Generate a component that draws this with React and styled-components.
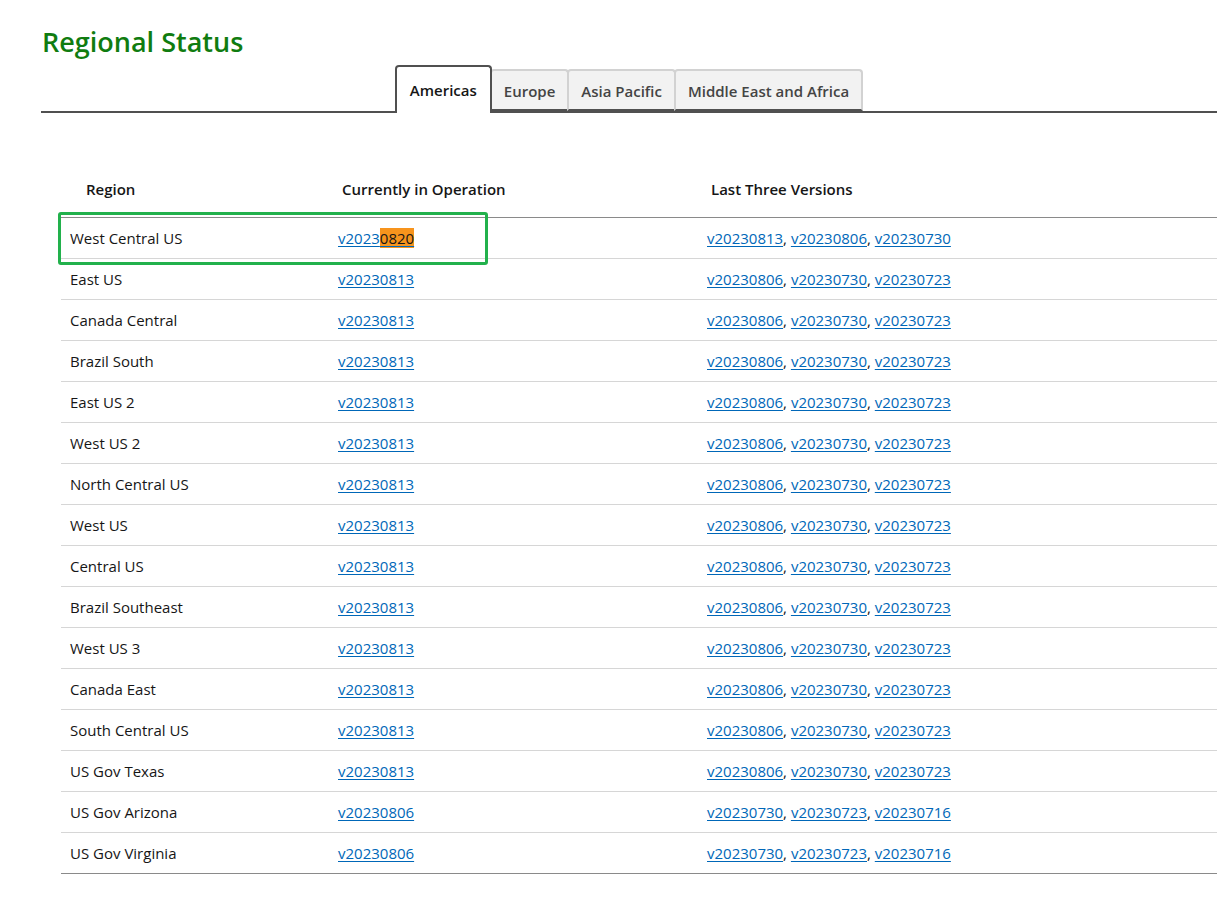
import React from "react";
import styled, { createGlobalStyle } from "styled-components";

const Global = createGlobalStyle`
  body { margin: 0; background: #fff; font-family: "Segoe UI", "Open Sans", "Noto Sans", sans-serif; color: #161616; }
`;

const Page = styled.div`
  padding: 21px 0 40px 41px;
  width: 1176px;
  overflow: hidden;
`;

const Title = styled.h1`
  margin: 3px 0 5px 1px;
  font-size: 27px;
  font-weight: 600;
  color: #107c10;
  line-height: 36px;
`;

const TabBar = styled.div`
  display: flex;
  justify-content: center;
  align-items: flex-end;
  border-bottom: 2px solid #505050;
  height: 46px;
`;

const Tab = styled.div`
  box-sizing: border-box;
  height: ${(p) => (p.$active ? "48px" : "42px")};
  margin-bottom: ${(p) => (p.$active ? "-2px" : "0")};
  padding: 0 ${(p) => (p.$active ? "13px" : "12px")};
  display: flex;
  align-items: center;
  padding-top: ${(p) => (p.$active ? "0" : "2px")};
  font-size: 15px;
  font-weight: 600;
  color: ${(p) => (p.$active ? "#161616" : "#444")};
  background: ${(p) => (p.$active ? "#fff" : "#f2f2f2")};
  border: 2px solid ${(p) => (p.$active ? "#505050" : "#d2d2d2")};
  border-bottom: ${(p) => (p.$active ? "none" : "2px solid #505050")};
  border-radius: 4px 4px 0 0;
  margin-left: ${(p) => (p.$first ? "0" : "-2px")};
  position: relative;
  z-index: ${(p) => (p.$active ? 1 : 0)};
`;

const TableWrap = styled.div`
  position: relative;
  margin: 48px 0 0 20px;
`;

const Table = styled.table`
  border-collapse: collapse;
  width: 1160px;
  font-size: 15px;
`;

const Th = styled.th`
  text-align: left;
  font-weight: 600;
  height: 56px;
  padding: 0 0 0 ${(p) => p.$pl}px;
  border-bottom: 1px solid #8a8a8a;
  width: ${(p) => p.$w}px;
  vertical-align: middle;
  box-sizing: border-box;
`;

const Tr = styled.tr`
  border-bottom: 1px solid ${(p) => (p.$last ? "#8a8a8a" : "#d6d6d6")};
`;

const Td = styled.td`
  height: 40px;
  padding: 0 0 0 9px;
  vertical-align: middle;
  white-space: nowrap;
`;

const Link = styled.a`
  color: #0067b8;
  text-decoration: underline;
  text-underline-offset: 2px;
`;

const Mark = styled.span`
  background: #f7941d;
  color: #161616;
`;

const Highlight = styled.div`
  position: absolute;
  left: -3px;
  top: 51px;
  width: 424px;
  height: 47px;
  border: 3px solid #22b14c;
  border-radius: 3px;
  pointer-events: none;
`;

const rows = [
  ["West Central US", "v20230820", ["v20230813", "v20230806", "v20230730"]],
  ["East US", "v20230813", ["v20230806", "v20230730", "v20230723"]],
  ["Canada Central", "v20230813", ["v20230806", "v20230730", "v20230723"]],
  ["Brazil South", "v20230813", ["v20230806", "v20230730", "v20230723"]],
  ["East US 2", "v20230813", ["v20230806", "v20230730", "v20230723"]],
  ["West US 2", "v20230813", ["v20230806", "v20230730", "v20230723"]],
  ["North Central US", "v20230813", ["v20230806", "v20230730", "v20230723"]],
  ["West US", "v20230813", ["v20230806", "v20230730", "v20230723"]],
  ["Central US", "v20230813", ["v20230806", "v20230730", "v20230723"]],
  ["Brazil Southeast", "v20230813", ["v20230806", "v20230730", "v20230723"]],
  ["West US 3", "v20230813", ["v20230806", "v20230730", "v20230723"]],
  ["Canada East", "v20230813", ["v20230806", "v20230730", "v20230723"]],
  ["South Central US", "v20230813", ["v20230806", "v20230730", "v20230723"]],
  ["US Gov Texas", "v20230813", ["v20230806", "v20230730", "v20230723"]],
  ["US Gov Arizona", "v20230806", ["v20230730", "v20230723", "v20230716"]],
  ["US Gov Virginia", "v20230806", ["v20230730", "v20230723", "v20230716"]],
];

export default function App() {
  return (
    <>
      <Global />
      <Page>
        <Title>Regional Status</Title>
        <TabBar>
          <Tab $active $first>Americas</Tab>
          <Tab>Europe</Tab>
          <Tab>Asia Pacific</Tab>
          <Tab>Middle East and Africa</Tab>
        </TabBar>
        <TableWrap>
          <Table>
            <thead>
              <tr>
                <Th $w={268} $pl={25}>Region</Th>
                <Th $w={369} $pl={13}>Currently in Operation</Th>
                <Th $pl={13}>Last Three Versions</Th>
              </tr>
            </thead>
            <tbody>
              {rows.map(([region, cur, last], i) => (
                <Tr key={region} $last={i === rows.length - 1}>
                  <Td>{region}</Td>
                  <Td>
                    {i === 0 ? (
                      <Link href="#">v2023<Mark>0820</Mark></Link>
                    ) : (
                      <Link href="#">{cur}</Link>
                    )}
                  </Td>
                  <Td>
                    {last.map((v, j) => (
                      <React.Fragment key={v}>
                        {j > 0 && ", "}
                        <Link href="#">{v}</Link>
                      </React.Fragment>
                    ))}
                  </Td>
                </Tr>
              ))}
            </tbody>
          </Table>
          <Highlight />
        </TableWrap>
      </Page>
    </>
  );
}
